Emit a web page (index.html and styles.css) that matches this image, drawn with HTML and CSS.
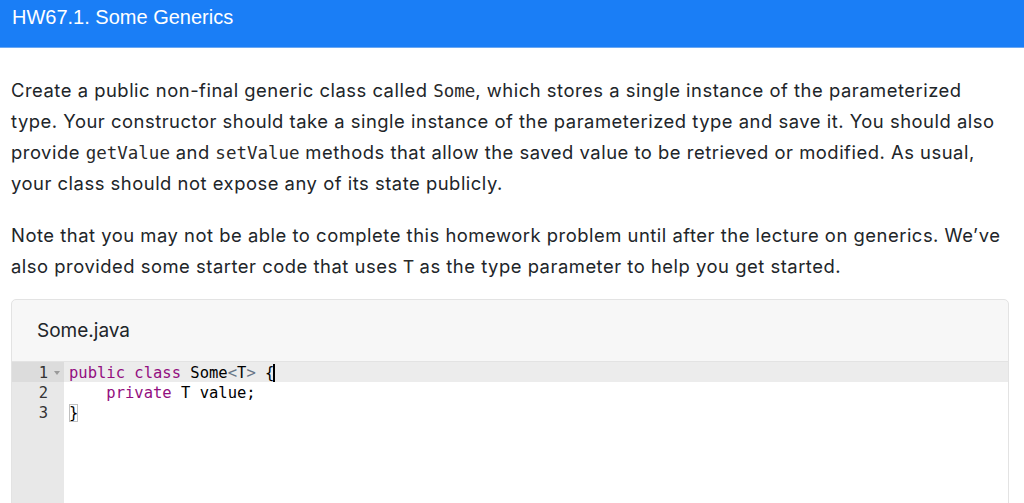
FILE: index.html
```html
<!DOCTYPE html>
<html>
<head>
<meta charset="utf-8">
<link rel="stylesheet" href="styles.css">
</head>
<body>
<header class="topbar">HW67.1. Some Generics</header>
<main class="content">
  <p class="para">Create a public non-final generic class called <code class="ic">Some</code>, which stores a single instance of the parameterized<br>type. Your constructor should take a single instance of the parameterized type and save it. You should also<br>provide <code class="ic">getValue</code> and <code class="ic">setValue</code> methods that allow the saved value to be retrieved or modified. As usual,<br>your class should not expose any of its state publicly.</p>
  <p class="para para-last">Note that you may not be able to complete this homework problem until after the lecture on generics. We’ve<br>also provided some starter code that uses <code class="ic">T</code> as the type parameter to help you get started.</p>
  <section class="card">
    <div class="card-head">Some.java</div>
    <div class="editor">
      <div class="gutter">
        <div class="gl active">1<span class="fold"></span></div>
        <div class="gl">2</div>
        <div class="gl">3</div>
      </div>
      <div class="code">
        <div class="cl active"><span class="kw">public</span> <span class="kw">class</span> Some<span class="op">&lt;</span>T<span class="op">&gt;</span> <span class="br">{</span><span class="cursor"></span></div>
        <div class="cl">    <span class="kw">private</span> T value;</div>
        <div class="cl"><span class="br match">}</span></div>
      </div>
    </div>
  </section>
</main>
</body>
</html>
```

FILE: styles.css
```css
html, body {
  margin: 0;
  padding: 0;
  background: #ffffff;
  overflow: hidden;
}
body {
  font-family: Inter, "Liberation Sans", Arial, sans-serif;
  color: #212529;
}
.topbar {
  background: #1a7ef6;
  color: #ffffff;
  font-family: "Liberation Sans", Arial, sans-serif;
  font-size: 20px;
  height: 47px;
  line-height: 34px;
  padding: 0 12px;
  border-bottom: 1px solid #6aa8f3;
}
.content {
  padding: 27px 0 0 11px;
}
.para {
  margin: 0 0 21px 0;
  font-size: 18.4px;
  letter-spacing: 0.52px;
  line-height: 31px;
  white-space: nowrap;
}
.para-last {
  margin-bottom: 17px;
}
.ic {
  font-family: "DejaVu Sans Mono", monospace;
  font-size: 17.5px;
  letter-spacing: 0;
  line-height: 0;
  color: #2a2a2a;
}
.card {
  border: 1px solid #e3e3e3;
  border-radius: 5px 5px 0 0;
  background: #f7f7f7;
  width: 996px;
}
.card-head {
  height: 61px;
  line-height: 61px;
  padding: 0 25px;
  font-size: 19px;
  color: #212529;
  border-bottom: 1px solid #e3e3e3;
}
.editor {
  display: flex;
  background: #ffffff;
  height: 300px;
  font-family: "DejaVu Sans Mono", monospace;
  font-size: 15.5px;
}
.gutter {
  width: 52px;
  background: #e8e8e8;
  color: #333333;
  flex: none;
}
.gl {
  height: 20px;
  line-height: 22px;
  text-align: right;
  padding-right: 16px;
  position: relative;
}
.gl.active {
  background: #dcdcdc;
}
.fold {
  position: absolute;
  right: 4px;
  top: 9px;
  width: 0;
  height: 0;
  border-left: 3px solid transparent;
  border-right: 3px solid transparent;
  border-top: 4px solid #9a9a9a;
}
.code {
  flex: 1;
  padding-left: 5px;
}
.cl {
  height: 20px;
  line-height: 22px;
  white-space: pre;
  color: #000000;
}
.cl.active {
  background: #ececec;
  margin-left: -5px;
  padding-left: 5px;
}
.kw { color: #930f80; }
.op { color: #687687; }
.br { position: relative; }
.match {
  outline: 1px solid #c0c0c0;
  outline-offset: -1px;
}
.cursor {
  display: inline-block;
  width: 2px;
  height: 18px;
  background: #000000;
  vertical-align: -4px;
  margin-left: -1px;
}
```
